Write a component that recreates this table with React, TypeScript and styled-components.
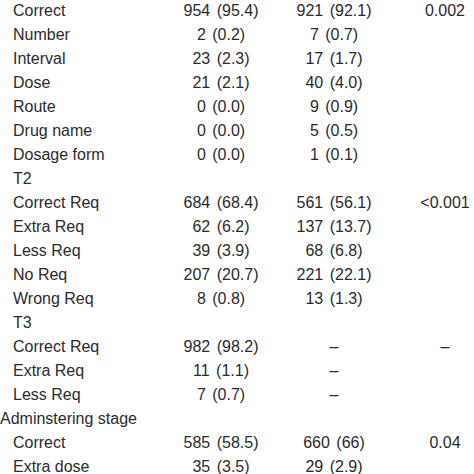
import React from "react";
import styled, { createGlobalStyle } from "styled-components";

const Global = createGlobalStyle`
  html, body {
    margin: 0;
    padding: 0;
    background: #ffffff;
    overflow: hidden;
  }
  body {
    font-family: "Liberation Sans", Arial, sans-serif;
  }
`;

const Table = styled.div`
  display: grid;
  grid-template-columns: 176px 90px 136px 86px;
  grid-auto-rows: 24px;
  margin-top: -1px;
  width: 488px;
  color: #2b2b2b;
  font-size: 16px;
  line-height: 24px;
`;

const Label = styled.div<{ $indent: boolean }>`
  padding-left: ${(p) => (p.$indent ? "13px" : "0")};
  white-space: nowrap;
`;

const Value = styled.div`
  text-align: center;
  white-space: nowrap;
  word-spacing: 2px;
`;

type Row = { label: string; indent?: boolean; a?: string; b?: string; p?: string };

const rows: Row[] = [
  { label: "Correct", indent: true, a: "954 (95.4)", b: "921 (92.1)", p: "0.002" },
  { label: "Number", indent: true, a: "2 (0.2)", b: "7 (0.7)" },
  { label: "Interval", indent: true, a: "23 (2.3)", b: "17 (1.7)" },
  { label: "Dose", indent: true, a: "21 (2.1)", b: "40 (4.0)" },
  { label: "Route", indent: true, a: "0 (0.0)", b: "9 (0.9)" },
  { label: "Drug name", indent: true, a: "0 (0.0)", b: "5 (0.5)" },
  { label: "Dosage form", indent: true, a: "0 (0.0)", b: "1 (0.1)" },
  { label: "T2", indent: true },
  { label: "Correct Req", indent: true, a: "684 (68.4)", b: "561 (56.1)", p: "<0.001" },
  { label: "Extra Req", indent: true, a: "62 (6.2)", b: "137 (13.7)" },
  { label: "Less Req", indent: true, a: "39 (3.9)", b: "68 (6.8)" },
  { label: "No Req", indent: true, a: "207 (20.7)", b: "221 (22.1)" },
  { label: "Wrong Req", indent: true, a: "8 (0.8)", b: "13 (1.3)" },
  { label: "T3", indent: true },
  { label: "Correct Req", indent: true, a: "982 (98.2)", b: "–", p: "–" },
  { label: "Extra Req", indent: true, a: "11 (1.1)", b: "–" },
  { label: "Less Req", indent: true, a: "7 (0.7)", b: "–" },
  { label: "Adminstering stage", indent: false },
  { label: "Correct", indent: true, a: "585 (58.5)", b: "660 (66)", p: "0.04" },
  { label: "Extra dose", indent: true, a: "35 (3.5)", b: "29 (2.9)" },
];

export default function App() {
  return (
    <>
      <Global />
      <Table>
        {rows.map((r, i) => (
          <React.Fragment key={i}>
            <Label $indent={!!r.indent}>{r.label}</Label>
            <Value>{r.a ?? ""}</Value>
            <Value>{r.b ?? ""}</Value>
            <Value>{r.p ?? ""}</Value>
          </React.Fragment>
        ))}
      </Table>
    </>
  );
}
